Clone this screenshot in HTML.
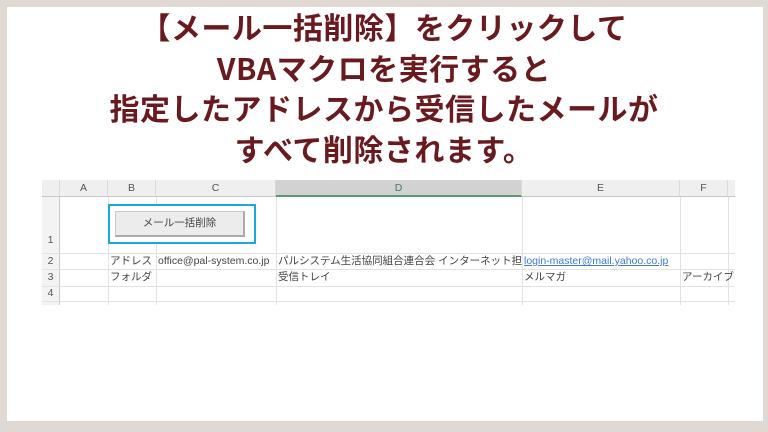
<!DOCTYPE html>
<html><head><meta charset="utf-8"><style>
*{margin:0;padding:0;box-sizing:border-box}
body{width:768px;height:432px;background:#e0d8d3;position:relative;overflow:hidden;font-family:"Liberation Sans","Noto Sans CJK JP",sans-serif}
.card{position:absolute;left:7px;top:7px;width:756px;height:414px;background:#fff}
.t{position:absolute;left:0;width:768px;text-align:center;font-size:30px;font-weight:bold;color:#6a1a1e;line-height:40px;font-family:"Noto Sans CJK JP",sans-serif;letter-spacing:0.5px}
.g{position:absolute;font-size:10.5px;color:#444;line-height:16px;white-space:nowrap;font-family:"Liberation Sans","Noto Sans CJK JP",sans-serif}
.h{position:absolute;top:180px;height:17px;background:#efefef;border-right:1px solid #dadada;border-bottom:1px solid #c8c8c8;text-align:center;font-size:10.5px;color:#555;line-height:17px}
.vl{position:absolute;top:197px;height:108px;width:1px;background:#e2e2e2}
.hl{position:absolute;left:42px;width:693px;height:1px;background:#e2e2e2}
.rh{position:absolute;left:42px;width:18px;background:#f3f3f3;border-right:1px solid #c8c8c8;font-size:10.5px;color:#555;text-align:center}
</style></head><body>
<div class="card"></div>
<div class="t" style="top:6px">【メール一括削除】をクリックして</div>
<div class="t" style="top:47px">VBAマクロを実行すると</div>
<div class="t" style="top:87px">指定したアドレスから受信したメールが</div>
<div class="t" style="top:128px">すべて削除されます。</div>

<div class="h" style="left:42px;width:18px"></div>
<div class="h" style="left:60px;width:48px">A</div>
<div class="h" style="left:108px;width:48px">B</div>
<div class="h" style="left:156px;width:120px">C</div>
<div class="h" style="left:276px;width:246px;background:#d2d2d2;border-bottom:2px solid #5a9a72;color:#3f7a58">D</div>
<div class="h" style="left:522px;width:158px">E</div>
<div class="h" style="left:680px;width:48px">F</div>
<div class="h" style="left:728px;width:7px;border-right:none"></div>

<div class="rh" style="top:197px;height:56px;line-height:86px">1</div>
<div class="rh" style="top:253px;height:16px;line-height:16px">2</div>
<div class="rh" style="top:269px;height:17px;line-height:17px">3</div>
<div class="rh" style="top:286px;height:15px;line-height:15px">4</div>
<div class="rh" style="top:301px;height:4px"></div>

<div class="vl" style="left:108px"></div><div class="vl" style="left:156px"></div><div class="vl" style="left:276px"></div><div class="vl" style="left:522px"></div><div class="vl" style="left:680px"></div><div class="vl" style="left:728px"></div>
<div class="hl" style="top:253px"></div><div class="hl" style="top:269px"></div><div class="hl" style="top:286px"></div><div class="hl" style="top:301px"></div>

<div style="position:absolute;left:108px;top:204px;width:148px;height:40px;border:2px solid #1aa7e6;background:#fff"></div>
<div style="position:absolute;left:115px;top:211px;width:130px;height:26px;background:#ececec;border:1px solid #c8c8c8;border-bottom:2px solid #aaa;border-right:2px solid #aaa;font-size:10.5px;color:#444;text-align:center;line-height:23px">メール一括削除</div>

<div class="g" style="left:110px;top:253px">アドレス</div>
<div class="g" style="left:158px;top:253px">office@pal-system.co.jp</div>
<div class="g" style="left:278px;top:253px;width:244px;overflow:hidden">パルシステム生活協同組合連合会 インターネット担当</div>
<div class="g" style="left:524px;top:253px;color:#3c7ad6;text-decoration:underline">login-master@mail.yahoo.co.jp</div>
<div class="g" style="left:110px;top:269px">フォルダ</div>
<div class="g" style="left:278px;top:269px">受信トレイ</div>
<div class="g" style="left:524px;top:269px">メルマガ</div>
<div class="g" style="left:682px;top:269px">アーカイブ</div>
</body></html>
